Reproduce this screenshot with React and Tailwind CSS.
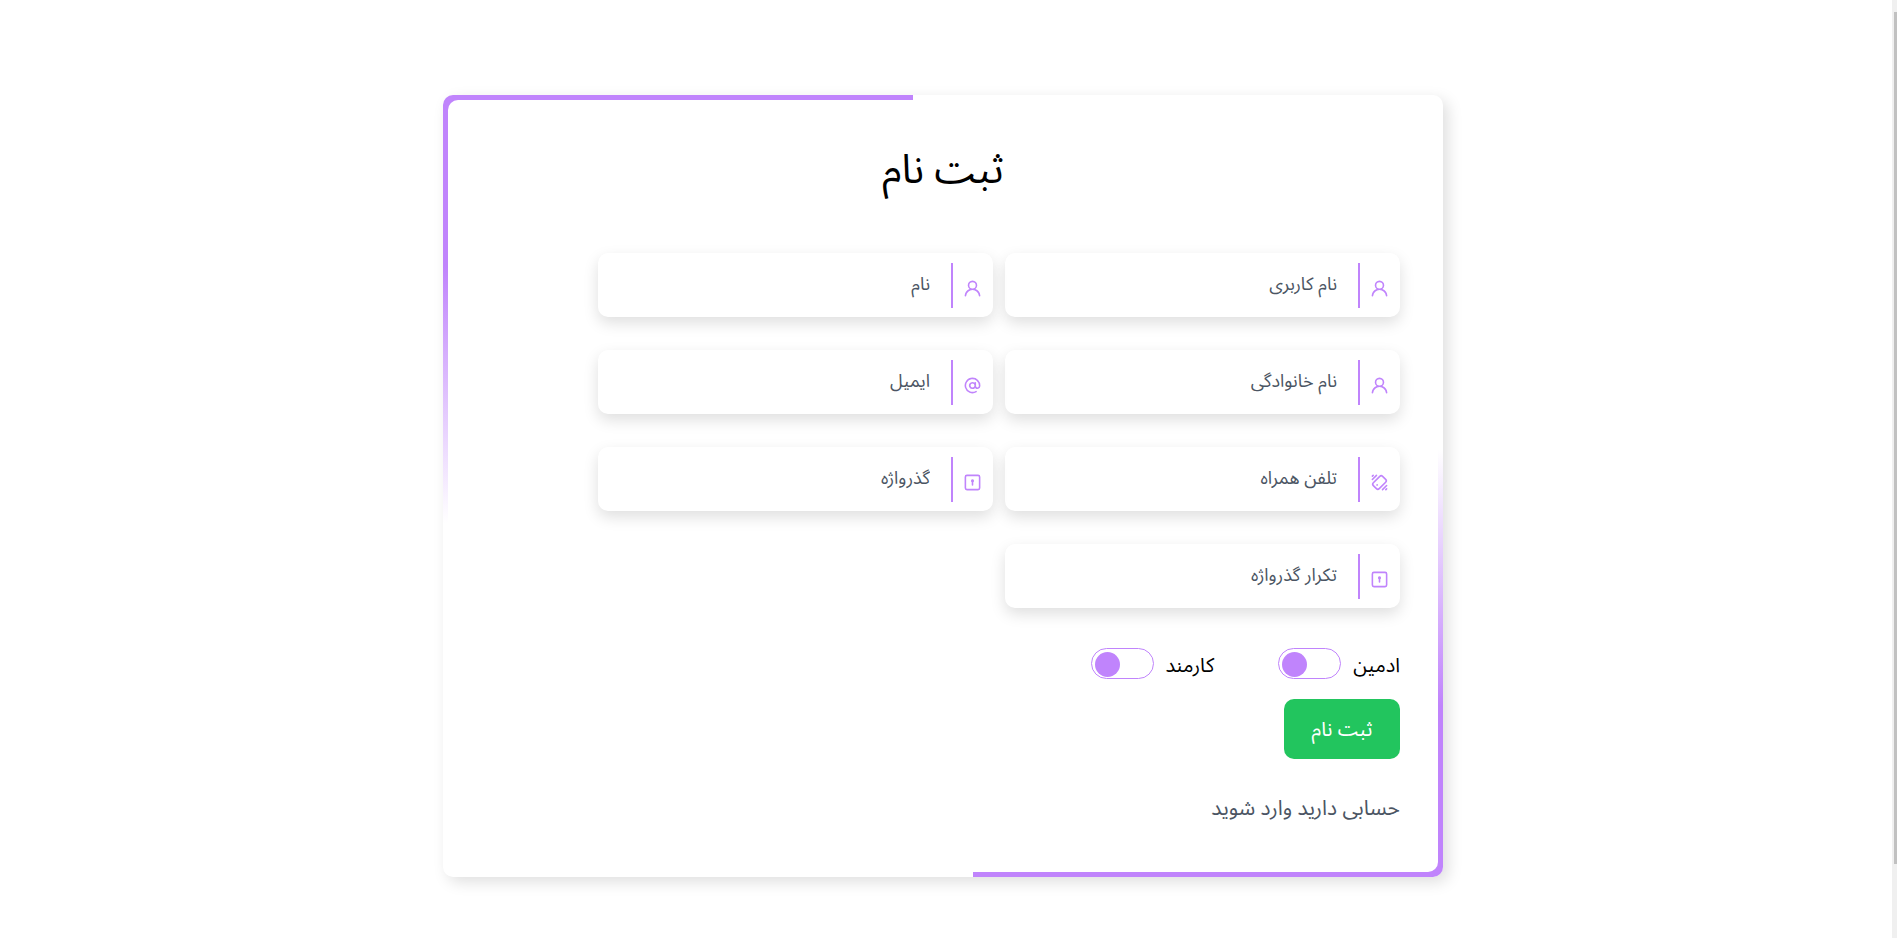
const userIcon = (
  <path d="M15.71,12.71a6,6,0,1,0-7.42,0,10,10,0,0,0-6.22,8.18,1,1,0,0,0,2,.22,8,8,0,0,1,15.9,0,1,1,0,0,0,1,.89h.11a1,1,0,0,0,.88-1.1A10,10,0,0,0,15.71,12.71ZM12,12a4,4,0,1,1,4-4A4,4,0,0,1,12,12Z" />
);

const atIcon = (
  <path d="M12,2a10,10,0,1,0,5,18.66,1,1,0,1,0-1-1.73A8,8,0,1,1,20,12v.75a1.75,1.75,0,0,1-3.5,0V8.5a1,1,0,0,0-1-1,1,1,0,0,0-1,.79A4.45,4.45,0,0,0,12,7.5,4.5,4.5,0,1,0,15.3,15,3.74,3.74,0,0,0,22,12.75V12A10,10,0,0,0,12,2Zm0,12.5A2.5,2.5,0,1,1,14.5,12,2.5,2.5,0,0,1,12,14.5Z" />
);

const keyholeIcon = (
  <>
    <rect x="3" y="3" width="18" height="18" rx="2" fill="none" stroke="currentColor" strokeWidth="2" />
    <path d="M12,8a2,2,0,0,0-1,3.7V15a1,1,0,0,0,2,0V11.7a2,2,0,0,0-1-3.7Z" />
  </>
);

const mobileIcon = (
  <>
    <g fill="none" stroke="currentColor" strokeWidth="2" strokeLinecap="round" strokeLinejoin="round">
      <rect x="6.75" y="3.75" width="10.5" height="16.5" rx="2.5" transform="rotate(45 12 12)" />
      <path d="M3 8.2 8.2 3M3 4 4 3M15.8 21 21 15.8M20 21 21 20" />
    </g>
    <circle cx="9" cy="15" r="1.1" />
  </>
);

const fields = [
  { id: "username", label: "نام کاربری", type: "text", icon: userIcon },
  { id: "first-name", label: "نام", type: "text", icon: userIcon },
  { id: "last-name", label: "نام خانوادگی", type: "text", icon: userIcon },
  { id: "email", label: "ایمیل", type: "email", icon: atIcon },
  { id: "phone", label: "تلفن همراه", type: "tel", icon: mobileIcon },
  { id: "password", label: "گذرواژه", type: "password", icon: keyholeIcon },
  { id: "password-repeat", label: "تکرار گذرواژه", type: "password", icon: keyholeIcon },
];

function Field({ id, label, type, icon }) {
  return (
    <div className="flex h-16 items-center rounded-[10px] bg-white pr-[11px] shadow-[0_6px_15px_rgba(0,0,0,0.13)]">
      <label htmlFor={id} className="pt-1.5 text-[#c084fc]">
        <svg viewBox="0 0 24 24" className="size-[19px]" fill="currentColor" aria-hidden="true">
          {icon}
        </svg>
      </label>
      <input
        id={id}
        type={type}
        dir="rtl"
        placeholder={label}
        aria-label={label}
        className="mr-2.5 h-[45px] min-w-0 flex-1 border-r-2 border-[#c084fc] bg-transparent pr-[21px] pb-1 text-right text-lg outline-none placeholder:text-[#4b5563]"
      />
    </div>
  );
}

function Toggle({ id, label }) {
  return (
    <label htmlFor={id} className="flex items-center gap-3 text-xl">
      <span className="pt-0.5">{label}</span>
      <input id={id} type="checkbox" role="switch" className="peer sr-only" />
      <span className="flex h-[31px] w-[63px] items-center justify-end rounded-full border border-[#c084fc] px-[3px] pt-px peer-checked:justify-start">
        <span className="size-[25px] rounded-full bg-[#c084fc]" />
      </span>
    </label>
  );
}

export default function App() {
  return (
    <div
      dir="rtl"
      className="flex h-screen flex-row bg-white font-['Noto_Sans','Noto_Sans_Arabic','Segoe_UI',sans-serif] text-black"
    >
      <div className="flex w-[5px] shrink-0 flex-col bg-[#f0f0f0] pt-3 pr-0 pl-[2px]" aria-hidden="true">
        <div className="h-[92%] bg-[#c1c1c1]" />
      </div>
      <main className="min-w-0 flex-1 overflow-hidden pt-[95px] pr-1.5">
        <section className="relative mx-auto max-w-[1000px] rounded-[10px] bg-white p-[5px] shadow-[5px_5px_15px_rgba(0,0,0,0.13)]">
          <div className="absolute top-0 left-0 h-[428px] w-[470px] rounded-tl-[10px] bg-linear-to-b/srgb from-[#c084fc] from-40% to-white" />
          <div className="absolute right-0 bottom-0 h-[428px] w-[470px] rounded-br-[10px] bg-linear-to-t/srgb from-[#c084fc] from-40% to-white" />
          <div className="relative rounded-[10px] bg-white px-[38px] pt-[38px] pb-[51px]">
            <h1 className="text-center text-[40px] leading-[60px]">ثبت نام</h1>
            <form onSubmit={(event) => event.preventDefault()} className="pt-[55px]">
              <div className="grid max-w-[802px] grid-cols-2 gap-x-3 gap-y-[33px]">
                {fields.map((field) => (
                  <Field key={field.id} {...field} />
                ))}
              </div>
              <div className="flex gap-16 pt-10">
                <Toggle id="admin" label="ادمین" />
                <Toggle id="employee" label="کارمند" />
              </div>
              <button type="submit" className="mt-5 h-[60px] w-[116px] rounded-[10px] bg-[#22c55e] text-xl text-white">
                ثبت نام
              </button>
            </form>
            <a href="#login" className="mt-[34px] block text-[21px] leading-7 text-[#4b5563]">
              حسابی دارید وارد شوید
            </a>
          </div>
        </section>
      </main>
    </div>
  );
}
